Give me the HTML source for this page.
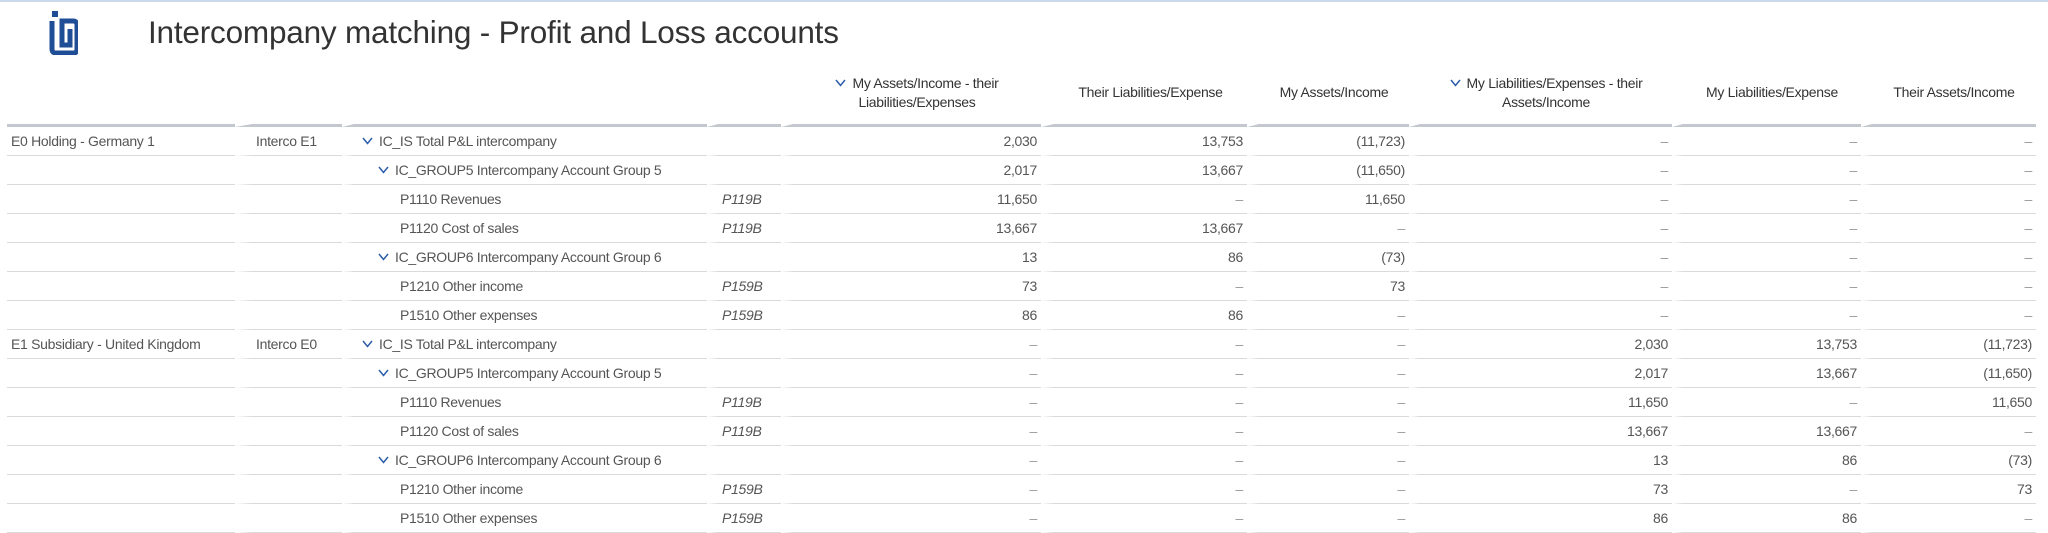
<!DOCTYPE html>
<html><head><meta charset="utf-8"><style>
html,body{margin:0;padding:0;background:#fff;width:2048px;height:531px;overflow:hidden;font-family:"Liberation Sans",sans-serif;}
.top{position:absolute;left:0;top:0;width:2048px;height:2px;background:#c9d8ea;}
.logo{position:absolute;left:48px;top:9px;}
.title{position:absolute;left:148px;top:14px;font-size:31.5px;color:#333;letter-spacing:-0.2px;}
table{position:absolute;left:7px;top:65px;border-collapse:separate;border-spacing:0;table-layout:fixed;font-size:14px;color:#555;letter-spacing:-0.3px;}
td{height:28px;border-bottom:1px solid #dadada;padding:0;white-space:nowrap;vertical-align:middle;overflow:hidden;}
th{height:55px;border-bottom:3px solid #c3c7ce;font-weight:normal;font-size:14px;color:#333;vertical-align:middle;text-align:center;padding:0 0 4px 0;line-height:19px;}
.g12{border-left:12px solid #fff;}
.g11{border-left:11px solid #fff;}
.g13{border-left:13px solid #fff;}
.g17{border-left:17px solid #fff;}
.n{text-align:right;padding-right:4px;}
.d{text-align:right;padding-right:4px;color:#999;}
.i{font-style:italic;padding-left:4px;}
.l0{padding-left:8px;}
.l1{padding-left:24px;}
.l2{padding-left:46px;}
.c{padding-left:4px;}
svg.ch{width:11px;height:8px;margin-right:6px;vertical-align:1px;}
</style></head><body>
<div class="top"></div>
<svg class="logo" width="30" height="46" viewBox="0 0 30 46">
<rect x="4" y="2" width="6" height="6" fill="#1f4e96"/>
<path d="M4 12 V40 Q4 44 8 44 H26 Q29 44 29 40 V16 Q29 12 25 12 H14 V36 H22 V20" fill="none" stroke="#1f4e96" stroke-width="5"/>
</svg>
<div class="title">Intercompany matching - Profit and Loss accounts</div>
<table>
<colgroup>
<col style="width:228px"><col style="width:107px"><col style="width:365px"><col style="width:74px"><col style="width:260px"><col style="width:206px"><col style="width:162px"><col style="width:263px"><col style="width:189px"><col style="width:175px">
</colgroup>
<tr>
<th></th><th class="g17"></th><th class="g12"></th><th class="g11"></th>
<th class="g12"><svg class="ch" viewBox="0 0 11 8"><path d="M1 1 L5.5 6.5 L10 1" fill="none" stroke="#2a5ca8" stroke-width="1.5"/></svg>My Assets/Income - their<br>Liabilities/Expenses</th>
<th class="g13">Their Liabilities/Expense</th>
<th class="g12">My Assets/Income</th>
<th class="g11"><svg class="ch" viewBox="0 0 11 8"><path d="M1 1 L5.5 6.5 L10 1" fill="none" stroke="#2a5ca8" stroke-width="1.5"/></svg>My Liabilities/Expenses - their<br>Assets/Income</th>
<th class="g11">My Liabilities/Expense</th>
<th class="g11">Their Assets/Income</th>
</tr>
<tr><td class="c">E0 Holding - Germany 1</td><td class="g17 c">Interco E1</td><td class="g12 l0"><svg class="ch" viewBox="0 0 11 8"><path d="M1 1 L5.5 6.5 L10 1" fill="none" stroke="#2a5ca8" stroke-width="1.5"/></svg>IC_IS Total P&amp;L intercompany</td><td class="g11"></td><td class="g12 n">2,030</td><td class="g13 n">13,753</td><td class="g12 n">(11,723)</td><td class="g11 d">–</td><td class="g11 d">–</td><td class="g11 d">–</td></tr>
<tr><td></td><td class="g17"></td><td class="g12 l1"><svg class="ch" viewBox="0 0 11 8"><path d="M1 1 L5.5 6.5 L10 1" fill="none" stroke="#2a5ca8" stroke-width="1.5"/></svg>IC_GROUP5 Intercompany Account Group 5</td><td class="g11"></td><td class="g12 n">2,017</td><td class="g13 n">13,667</td><td class="g12 n">(11,650)</td><td class="g11 d">–</td><td class="g11 d">–</td><td class="g11 d">–</td></tr>
<tr><td></td><td class="g17"></td><td class="g12 l2">P1110 Revenues</td><td class="g11 i">P119B</td><td class="g12 n">11,650</td><td class="g13 d">–</td><td class="g12 n">11,650</td><td class="g11 d">–</td><td class="g11 d">–</td><td class="g11 d">–</td></tr>
<tr><td></td><td class="g17"></td><td class="g12 l2">P1120 Cost of sales</td><td class="g11 i">P119B</td><td class="g12 n">13,667</td><td class="g13 n">13,667</td><td class="g12 d">–</td><td class="g11 d">–</td><td class="g11 d">–</td><td class="g11 d">–</td></tr>
<tr><td></td><td class="g17"></td><td class="g12 l1"><svg class="ch" viewBox="0 0 11 8"><path d="M1 1 L5.5 6.5 L10 1" fill="none" stroke="#2a5ca8" stroke-width="1.5"/></svg>IC_GROUP6 Intercompany Account Group 6</td><td class="g11"></td><td class="g12 n">13</td><td class="g13 n">86</td><td class="g12 n">(73)</td><td class="g11 d">–</td><td class="g11 d">–</td><td class="g11 d">–</td></tr>
<tr><td></td><td class="g17"></td><td class="g12 l2">P1210 Other income</td><td class="g11 i">P159B</td><td class="g12 n">73</td><td class="g13 d">–</td><td class="g12 n">73</td><td class="g11 d">–</td><td class="g11 d">–</td><td class="g11 d">–</td></tr>
<tr><td></td><td class="g17"></td><td class="g12 l2">P1510 Other expenses</td><td class="g11 i">P159B</td><td class="g12 n">86</td><td class="g13 n">86</td><td class="g12 d">–</td><td class="g11 d">–</td><td class="g11 d">–</td><td class="g11 d">–</td></tr>
<tr><td class="c">E1 Subsidiary - United Kingdom</td><td class="g17 c">Interco E0</td><td class="g12 l0"><svg class="ch" viewBox="0 0 11 8"><path d="M1 1 L5.5 6.5 L10 1" fill="none" stroke="#2a5ca8" stroke-width="1.5"/></svg>IC_IS Total P&amp;L intercompany</td><td class="g11"></td><td class="g12 d">–</td><td class="g13 d">–</td><td class="g12 d">–</td><td class="g11 n">2,030</td><td class="g11 n">13,753</td><td class="g11 n">(11,723)</td></tr>
<tr><td></td><td class="g17"></td><td class="g12 l1"><svg class="ch" viewBox="0 0 11 8"><path d="M1 1 L5.5 6.5 L10 1" fill="none" stroke="#2a5ca8" stroke-width="1.5"/></svg>IC_GROUP5 Intercompany Account Group 5</td><td class="g11"></td><td class="g12 d">–</td><td class="g13 d">–</td><td class="g12 d">–</td><td class="g11 n">2,017</td><td class="g11 n">13,667</td><td class="g11 n">(11,650)</td></tr>
<tr><td></td><td class="g17"></td><td class="g12 l2">P1110 Revenues</td><td class="g11 i">P119B</td><td class="g12 d">–</td><td class="g13 d">–</td><td class="g12 d">–</td><td class="g11 n">11,650</td><td class="g11 d">–</td><td class="g11 n">11,650</td></tr>
<tr><td></td><td class="g17"></td><td class="g12 l2">P1120 Cost of sales</td><td class="g11 i">P119B</td><td class="g12 d">–</td><td class="g13 d">–</td><td class="g12 d">–</td><td class="g11 n">13,667</td><td class="g11 n">13,667</td><td class="g11 d">–</td></tr>
<tr><td></td><td class="g17"></td><td class="g12 l1"><svg class="ch" viewBox="0 0 11 8"><path d="M1 1 L5.5 6.5 L10 1" fill="none" stroke="#2a5ca8" stroke-width="1.5"/></svg>IC_GROUP6 Intercompany Account Group 6</td><td class="g11"></td><td class="g12 d">–</td><td class="g13 d">–</td><td class="g12 d">–</td><td class="g11 n">13</td><td class="g11 n">86</td><td class="g11 n">(73)</td></tr>
<tr><td></td><td class="g17"></td><td class="g12 l2">P1210 Other income</td><td class="g11 i">P159B</td><td class="g12 d">–</td><td class="g13 d">–</td><td class="g12 d">–</td><td class="g11 n">73</td><td class="g11 d">–</td><td class="g11 n">73</td></tr>
<tr><td></td><td class="g17"></td><td class="g12 l2">P1510 Other expenses</td><td class="g11 i">P159B</td><td class="g12 d">–</td><td class="g13 d">–</td><td class="g12 d">–</td><td class="g11 n">86</td><td class="g11 n">86</td><td class="g11 d">–</td></tr>
</table>
</body></html>
